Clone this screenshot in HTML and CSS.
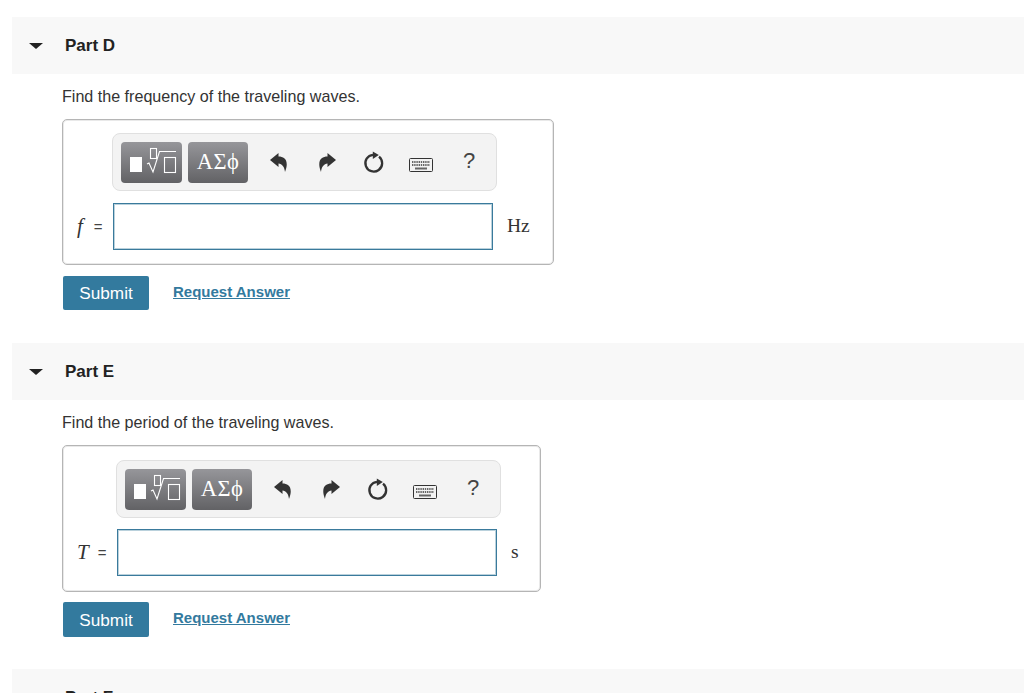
FILE: index.html
```html
<!DOCTYPE html>
<html lang="en">
<head>
  <meta charset="UTF-8" />
  <title>Parts</title>
  <link rel="stylesheet" href="styles.css">
</head>
<body>
  <svg class="defs" width="0" height="0">
    <symbol id="tplicon" viewBox="0 0 61 41">
      <rect class="t-fill" x="9" y="15" width="12" height="15"/>
      <rect class="t-line" x="29.5" y="6.5" width="6" height="10"/>
      <path class="t-line" d="M26 22 L28 21 L32 30 L38.5 9.5 L55 9.5"/>
      <rect class="t-line" x="43.5" y="15.5" width="11" height="15"/>
    </symbol>
    <symbol id="undo" viewBox="0 0 18 20"><path d="M0 7 L8.5 0 L8.5 3.6 C14.5 3.6 19.5 7.5 15 19 C14.5 13.5 12 10.8 8.5 10.4 L8.5 14 Z"/></symbol>
    <symbol id="redo" viewBox="0 0 18 20"><path d="M18 7 L9.5 0 L9.5 3.6 C3.5 3.6 -1.5 7.5 3 19 C3.5 13.5 6 10.8 9.5 10.4 L9.5 14 Z"/></symbol>
    <symbol id="reset" viewBox="0 0 22 24"><path class="ring" d="M16 5.6 A8.4 8.4 0 1 1 10 3.8"/><path d="M9.8 0.5 L15.8 4 L9.8 8 Z"/></symbol>
    <symbol id="keys" viewBox="0 0 24 14">
      <rect class="kb" x="0.5" y="0.5" width="23" height="13" rx="1"/>
      <path class="kbk" d="M3 4h18M3 7h18"/>
      <path class="kbs" d="M6 10.5h12"/>
    </symbol>
  </svg>

  <section class="part">
    <div class="part-head"><span class="arrow"></span><h2>Part D</h2></div>
    <p class="prompt">Find the frequency of the traveling waves.</p>
    <div class="answer-box box-d">
      <div class="toolbar">
        <button class="tpl"><svg class="tpl-ico"><use href="#tplicon"/></svg></button>
        <button class="tpl greek">ΑΣϕ</button>
        <svg class="ico i-undo"><use href="#undo"/></svg>
        <svg class="ico i-redo"><use href="#redo"/></svg>
        <svg class="ico i-reset"><use href="#reset"/></svg>
        <svg class="ico i-keys"><use href="#keys"/></svg>
        <span class="help">?</span>
      </div>
      <div class="row">
        <span class="var"><i>f</i><span>=</span></span>
        <input class="inp" type="text" />
        <span class="unit">Hz</span>
      </div>
    </div>
    <div class="actions">
      <button class="submit">Submit</button>
      <a class="reqlink" href="#">Request Answer</a>
    </div>
  </section>

  <section class="part">
    <div class="part-head"><span class="arrow"></span><h2>Part E</h2></div>
    <p class="prompt">Find the period of the traveling waves.</p>
    <div class="answer-box box-e">
      <div class="toolbar">
        <button class="tpl"><svg class="tpl-ico"><use href="#tplicon"/></svg></button>
        <button class="tpl greek">ΑΣϕ</button>
        <svg class="ico i-undo"><use href="#undo"/></svg>
        <svg class="ico i-redo"><use href="#redo"/></svg>
        <svg class="ico i-reset"><use href="#reset"/></svg>
        <svg class="ico i-keys"><use href="#keys"/></svg>
        <span class="help">?</span>
      </div>
      <div class="row">
        <span class="var"><i>T</i><span>=</span></span>
        <input class="inp" type="text" />
        <span class="unit">s</span>
      </div>
    </div>
    <div class="actions">
      <button class="submit">Submit</button>
      <a class="reqlink" href="#">Request Answer</a>
    </div>
  </section>

  <section class="part part-last">
    <div class="part-head"><span class="arrow"></span><h2>Part F</h2></div>
  </section>
</body>
</html>
```

FILE: styles.css
```css
html, body {
  height: 693px;
  overflow: hidden;
}
body {
  box-sizing: border-box;
  margin: 0;
  padding: 17px 0 0 12px;
  background: #fff;
  color: #333;
  font-family: "Liberation Sans", Arial, sans-serif;
  font-size: 16px;
}
.defs {
  display: block;
}
.part {
  height: 326px;
}
.part-last {
  height: 24px;
  overflow: hidden;
}
.part-head {
  display: flex;
  align-items: center;
  height: 57px;
  background: #f8f8f8;
}
.arrow {
  width: 0;
  height: 0;
  margin-left: 17px;
  border-left: 7px solid transparent;
  border-right: 7px solid transparent;
  border-top: 6px solid #222;
}
.part-head h2 {
  margin: 0 0 0 22px;
  font-size: 17px;
  font-weight: bold;
  color: #222;
}
.prompt {
  margin: 13px 0 0 50px;
  height: 19px;
  line-height: 19px;
  font-size: 16.1px;
  color: #333;
}
.answer-box {
  box-sizing: border-box;
  margin: 13px 0 0 50px;
  height: 146px;
  background: #fff;
  border: 1px solid #b5b5b5;
  border-radius: 5px;
  box-shadow: inset 0 0 0 1px rgba(181, 181, 181, 0.3);
}
.box-d { width: 492px; }
.box-e { width: 479px; height: 147px; }
.toolbar {
  box-sizing: border-box;
  display: flex;
  align-items: center;
  position: relative;
  width: 385px;
  height: 58px;
  margin: 13px 0 0 49px;
  padding-left: 8px;
  background: #f3f3f3;
  border: 1px solid #e0e0e0;
  border-radius: 8px;
}
.box-e .toolbar { margin: 14px 0 0 53px; }
.tpl {
  display: block;
  box-sizing: border-box;
  width: 61px;
  height: 41px;
  margin-right: 6px;
  padding: 0;
  border: none;
  border-radius: 4px;
  background: linear-gradient(#96969a, #626265);
  color: #fff;
}
.tpl-ico {
  display: block;
  width: 61px;
  height: 41px;
}
.t-fill {
  fill: #fff;
}
.t-line {
  fill: none;
  stroke: #fff;
  stroke-width: 1.1;
}
.greek {
  width: 60px;
  font-family: "Liberation Serif", serif;
  font-size: 22.5px;
  letter-spacing: 0.5px;
}
.ico {
  position: absolute;
  fill: #333;
}
.i-undo { left: 157px; top: 19px; width: 18px; height: 20px; }
.i-redo { left: 205px; top: 19px; width: 18px; height: 20px; }
.i-reset { left: 250px; top: 17px; width: 22px; height: 24px; }
.i-keys { left: 296px; top: 24px; width: 24px; height: 14px; }
.ring {
  fill: none;
  stroke: #333;
  stroke-width: 2.3;
}
.kb {
  fill: #f3f3f3;
  stroke: #333;
}
.kbk {
  fill: none;
  stroke: #666;
  stroke-width: 2;
  stroke-dasharray: 1.4 0.8;
}
.kbs {
  fill: none;
  stroke: #666;
  stroke-width: 2;
}
.help {
  position: absolute;
  left: 350px;
  top: 15px;
  font-size: 22px;
  line-height: 24px;
  color: #444;
}
.row {
  display: flex;
  align-items: center;
  margin-top: 12px;
}
.box-e .row { margin-top: 11px; }
.var {
  box-sizing: border-box;
  display: flex;
  align-items: center;
  width: 50px;
  padding-left: 14px;
  font-family: "Liberation Serif", serif;
  font-size: 21px;
  white-space: nowrap;
}
.var span {
  margin-left: 9px;
  font-family: "Liberation Sans", sans-serif;
  font-size: 15px;
  color: #444;
}
.box-d .var span { margin-left: 11px; }
.box-e .var { width: 54px; }
.inp {
  box-sizing: border-box;
  width: 380px;
  height: 47px;
  padding: 0;
  background: #fff;
  border: 1px solid #3a7a9c;
  border-radius: 0;
  box-shadow: inset 0 0 0 1px rgba(58, 122, 156, 0.35);
}
.unit {
  margin: -2px 0 0 14px;
  font-family: "Liberation Serif", serif;
  font-size: 19.5px;
  color: #333;
}
.actions {
  display: flex;
  align-items: flex-start;
  margin: 11px 0 0 51px;
}
.box-e + .actions { margin-top: 10px; }
.submit {
  width: 86px;
  height: 34px;
  padding: 1px 0 0;
  border: none;
  border-radius: 2px;
  background: #337a9e;
  color: #fff;
  font-family: "Liberation Sans", sans-serif;
  font-size: 17.2px;
}
.box-e + .actions .submit { height: 35px; }
.reqlink {
  margin: 7px 0 0 24px;
  color: #337a9e;
  font-size: 15px;
  font-weight: bold;
  line-height: 18px;
}
```
